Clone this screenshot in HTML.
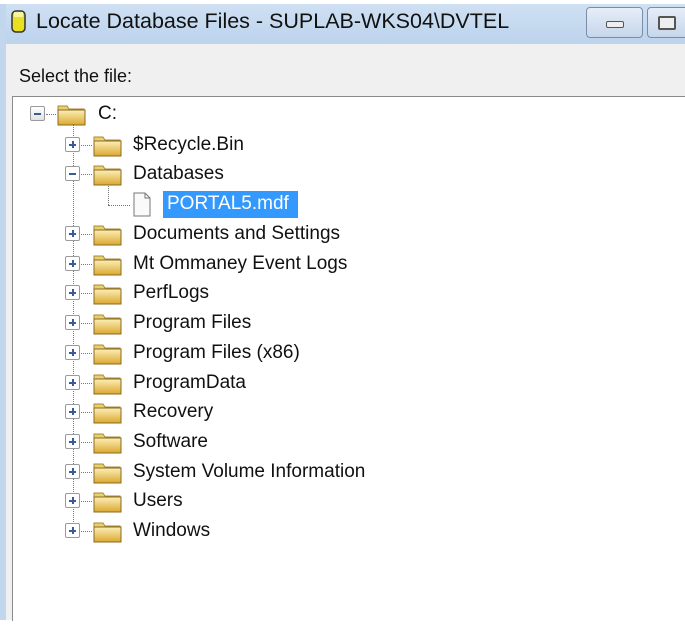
<!DOCTYPE html>
<html><head><meta charset="utf-8"><style>
body{margin:0;width:685px;height:626px;overflow:hidden;background:#fff;font-family:"Liberation Sans",sans-serif;position:relative}
.a{position:absolute}
.title{left:0;top:4px;width:685px;height:40px;background:linear-gradient(#cfe0f3,#bcd3ec)}
.body{left:0;top:44px;width:685px;height:576px;background:#f0f0f0}
.lb{left:0;top:4px;width:6px;height:616px;background:#c2d7ee}
.tree{left:12px;top:96px;width:680px;height:524px;background:#fff;border:1px solid #8a8a8a;border-right:none;border-bottom:none}
.t{font-size:19px;color:#111;white-space:nowrap;letter-spacing:0px}
.box{width:13px;height:13px;border:1px solid #9a9a9a;background:linear-gradient(#fff,#e2e2e2);border-radius:2px}
.box:before{content:"";position:absolute;left:3px;top:6px;width:7px;height:2px;background:#3a5a9a}
.plus:after{content:"";position:absolute;left:6px;top:3px;width:2px;height:7px;background:#3a5a9a}
.vd{border-left:1px dotted #777;width:0}
.hd{border-top:1px dotted #777;height:0}
.btn{top:7px;height:29px;border:1px solid #7a8ea8;border-radius:4px;background:linear-gradient(#e6eef8,#c6d6ea)}
</style></head><body>
<div class="a title"></div>
<div class="a body"></div>
<div class="a lb"></div>
<svg class="a" style="left:10px;top:8px" width="18" height="26"><rect x="2" y="3" width="13" height="21" rx="4" fill="#e8e020" stroke="#333" stroke-width="1.5"/><rect x="4" y="4" width="9" height="5" fill="#f7f4a0"/></svg>
<div class="a t" style="left:36px;top:9px;font-size:21.5px">Locate Database Files - SUPLAB-WKS04\DVTEL</div>
<div class="a btn" style="left:586px;width:55px"><div class="a" style="left:19px;top:13px;width:16px;height:5px;border:1px solid #555;border-radius:2px;background:#eee"></div></div>
<div class="a btn" style="left:647px;width:50px"><div class="a" style="left:10px;top:8px;width:14px;height:10px;border:2px solid #555;border-radius:2px;background:#eee"></div></div>
<div class="a t" style="left:19px;top:66px;font-size:18px">Select the file:</div>
<div class="a tree"></div>
<div id="tr"></div>
<script>
var h='';
function folder(x,y){return '<svg class="a" style="left:'+x+'px;top:'+(y-12)+'px" width="30" height="23"><path d="M1 3h9l2 3h15v16H1z" fill="#e8cf70" stroke="#a88a30"/><path d="M1 7h27v15H1z" fill="url(#g)" stroke="#8a6a20"/><defs><linearGradient id="g" x1="0" y1="0" x2="0" y2="1"><stop offset="0" stop-color="#fbefb8"/><stop offset="1" stop-color="#dca830"/></linearGradient></defs></svg>';}
h+='<div class="a box" style="left:30px;top:106px"></div>';
h+='<div class="a hd" style="left:46px;top:114px;width:10px"></div>';
h+=folder(57,115);
h+='<div class="a t" style="left:98px;top:103px">C:</div>';
h+='<div class="a vd" style="left:73px;top:124px;height:408px"></div>';
var rows=[[145,'$Recycle.Bin',1],[174,'Databases',0],[234,'Documents and Settings',1],[264,'Mt Ommaney Event Logs',1],[293,'PerfLogs',1],[323,'Program Files',1],[353,'Program Files (x86)',1],[383,'ProgramData',1],[412,'Recovery',1],[442,'Software',1],[472,'System Volume Information',1],[501,'Users',1],[531,'Windows',1]];
rows.forEach(function(r){var y=r[0];
h+='<div class="a box '+(r[2]?'plus':'')+'" style="left:65px;top:'+(y-8)+'px;background:#fff"></div>';
h+='<div class="a hd" style="left:81px;top:'+y+'px;width:11px"></div>';
h+=folder(93,y+1);
h+='<div class="a t" style="left:133px;top:'+(y-11)+'px">'+r[1]+'</div>';});
h+='<div class="a vd" style="left:108px;top:186px;height:19px"></div><div class="a hd" style="left:108px;top:205px;width:22px"></div>';
h+='<svg class="a" style="left:133px;top:192px" width="19" height="26"><path d="M1 1h11l5 5v18H1z" fill="#fafafa" stroke="#777"/><path d="M12 1v5h5" fill="none" stroke="#777"/></svg>';
h+='<div class="a" style="left:163px;top:191px;width:135px;height:27px;background:#3399ff"></div>';
h+='<div class="a t" style="left:167px;top:193px;color:#fff">PORTAL5.mdf</div>';
document.getElementById('tr').innerHTML=h;
</script>
</body></html>
